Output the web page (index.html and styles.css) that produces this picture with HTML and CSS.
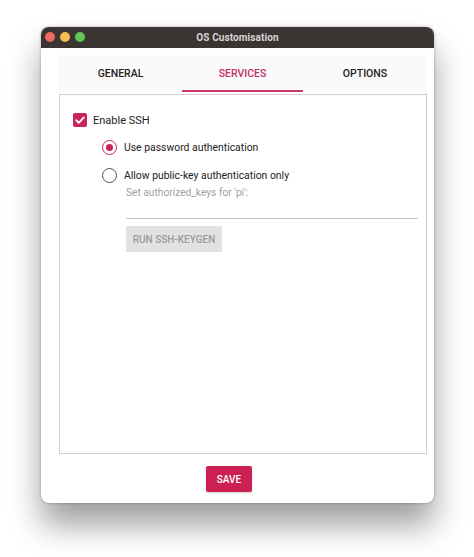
FILE: index.html
```html
<!DOCTYPE html>
<html>
<head>
<meta charset="utf-8">
<link rel="stylesheet" href="styles.css">
</head>
<body>
<div class="window">
  <div class="titlebar">
    <div class="lights">
      <span class="light red"></span>
      <span class="light yellow"></span>
      <span class="light green"></span>
    </div>
    <div class="title">OS Customisation</div>
  </div>
  <div class="body">
    <div class="tabs">
      <div class="tab">GENERAL</div>
      <div class="tab active">SERVICES</div>
      <div class="tab">OPTIONS</div>
    </div>
    <div class="panel">
      <div class="row check-row">
        <span class="checkbox">
          <svg width="14" height="14" viewBox="0 0 14 14"><path d="M3.2 7.2 L5.8 9.8 L10.8 4.4" fill="none" stroke="#fff" stroke-width="1.8" stroke-linecap="round" stroke-linejoin="round"/></svg>
        </span>
        <span class="label">Enable SSH</span>
      </div>
      <div class="options">
        <div class="row radio-row first">
          <span class="radio checked"><span class="dot"></span></span>
          <span class="label">Use password authentication</span>
        </div>
        <div class="row radio-row second">
          <span class="radio"></span>
          <span class="label">Allow public-key authentication only</span>
        </div>
        <div class="keys">
          <div class="hint">Set authorized_keys for 'pi':</div>
          <div class="field"></div>
          <div class="keygen">RUN SSH-KEYGEN</div>
        </div>
      </div>
    </div>
    <div class="footer">
      <div class="save">SAVE</div>
    </div>
  </div>
</div>
</body>
</html>
```

FILE: styles.css
```css
html, body {
  margin: 0;
  padding: 0;
  background: #ffffff;
}
body {
  font-family: Roboto, "Liberation Sans", sans-serif;
  padding: 27px 0 0 41px;
  height: 557px;
  box-sizing: border-box;
  overflow: hidden;
}
.window {
  width: 393px;
  height: 476px;
  border-radius: 8px;
  background: #ffffff;
  box-shadow: 0 22px 32px rgba(0,0,0,0.38), 0 0 3px rgba(0,0,0,0.3);
  overflow: hidden;
  display: flex;
  flex-direction: column;
}
.titlebar {
  height: 21px;
  background: #3a3533;
  position: relative;
  display: flex;
  align-items: center;
  justify-content: center;
}
.lights {
  position: absolute;
  left: 4px;
  top: 5px;
  display: flex;
  gap: 5px;
}
.light {
  width: 10px;
  height: 10px;
  border-radius: 50%;
  display: block;
}
.red { background: #ec6a5e; }
.yellow { background: #f4bf4f; }
.green { background: #61c554; }
.title {
  color: #d6d4d3;
  font-size: 10px;
  font-weight: 700;
  letter-spacing: 0.1px;
}
.body {
  flex: 1;
  padding: 7px 7px 0 18px;
  display: flex;
  flex-direction: column;
}
.tabs {
  height: 37px;
  background: #fafafa;
  display: flex;
}
.tab {
  flex: 1;
  display: flex;
  align-items: center;
  justify-content: center;
  font-size: 10.5px;
  font-weight: 500;
  color: #222;
  padding-top: 0;
  box-sizing: border-box;
}
.tab.active {
  color: #c2306a;
  border-bottom: 2px solid #c8366d;
  padding-top: 2px;
}
.tab:first-child { flex: 0 0 123px; }
.tab.active { flex: 0 0 121px; }
.panel {
  margin-top: 2px;
  height: 360px;
  box-sizing: border-box;
  border: 1px solid #cfcfcf;
  padding: 18px 0 0 13px;
}
.row {
  display: flex;
  align-items: center;
  height: 14px;
  font-size: 11px;
  color: #222;
}
.checkbox {
  width: 14px;
  height: 14px;
  border-radius: 2px;
  background: #c7255c;
  display: block;
}
.checkbox svg { display: block; }
.check-row .label { margin-left: 6px; }
.options {
  padding-left: 29px;
}
.radio-row .label { font-size: 10.4px; }
.radio-row.first { margin-top: 13px; }
.radio-row.second { margin-top: 14px; }
.radio {
  width: 15px;
  height: 15px;
  box-sizing: border-box;
  border: 1.5px solid #505050;
  border-radius: 50%;
  display: flex;
  align-items: center;
  justify-content: center;
}
.radio.checked { border-color: #c7255c; }
.radio .dot {
  width: 7px;
  height: 7px;
  border-radius: 50%;
  background: #c7255c;
}
.radio-row .label { margin-left: 7px; }
.keys {
  padding-left: 24px;
  margin-top: 5px;
}
.hint {
  font-size: 10.2px;
  color: #a0a0a0;
  line-height: 12px;
}
.field {
  width: 292px;
  height: 19px;
  border-bottom: 1px solid #c4c4c4;
}
.keygen {
  margin-top: 7px;
  width: 96px;
  height: 26px;
  background: #e2e2e2;
  color: #9b9b9b;
  font-size: 10px;
  font-weight: 500;
  display: flex;
  align-items: center;
  justify-content: center;
}
.footer {
  padding: 12px 0 0 147px;
}
.save {
  width: 46px;
  height: 26px;
  background: #cc1f52;
  color: #ffffff;
  font-size: 10px;
  font-weight: 500;
  border-radius: 2px;
  display: flex;
  align-items: center;
  justify-content: center;
  box-shadow: 0 1px 2px rgba(0,0,0,0.2);
}
```
